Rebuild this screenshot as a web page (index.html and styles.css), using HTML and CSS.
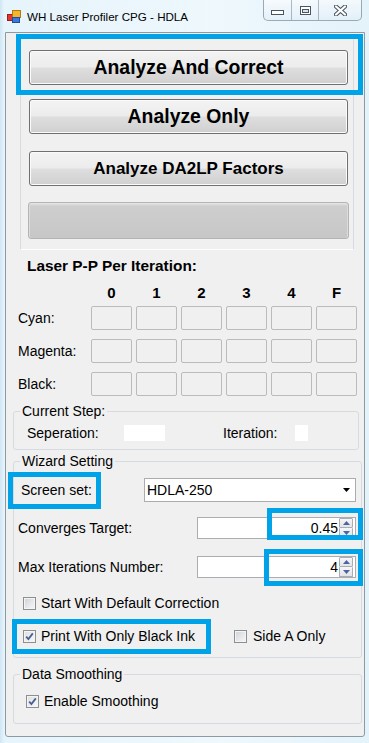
FILE: index.html
```html
<!DOCTYPE html>
<html>
<head>
<meta charset="utf-8">
<title>WH Laser Profiler CPG - HDLA</title>
<link rel="stylesheet" href="styles.css">
</head>
<body>
<div class="window">
  <div class="titlebar">
    <svg class="app-icon" width="14" height="13" viewBox="0 0 14 13">
      <rect x="0.5" y="4.5" width="5" height="6" fill="#e0382e" stroke="#9b1f18"/>
      <rect x="5.5" y="0.5" width="8" height="7" fill="#f6b52a" stroke="#b57a0e"/>
      <rect x="5.5" y="7.5" width="7" height="5" fill="#3d79dc" stroke="#1f4ea0"/>
    </svg>
    <span class="title">WH Laser Profiler CPG - HDLA</span>
    <div class="caption">
      <div class="cbtn min">
        <svg width="13" height="5" viewBox="0 0 13 5"><rect x="0.5" y="0.5" width="12" height="4" fill="#fff" stroke="#4a5560"/></svg>
      </div>
      <div class="cbtn max">
        <svg width="11" height="9" viewBox="0 0 11 9"><rect x="0.5" y="0.5" width="10" height="8" fill="#fff" stroke="#4a5560"/><rect x="2.5" y="3.5" width="6" height="3" fill="#d8e4ec" stroke="#4a5560"/></svg>
      </div>
      <div class="cbtn close">
        <svg width="13" height="11" viewBox="0 0 13 11"><path d="M2 1.5 L11 9.5 M11 1.5 L2 9.5" stroke="#4a5560" stroke-width="4.2" stroke-linecap="round"/><path d="M2 1.5 L11 9.5 M11 1.5 L2 9.5" stroke="#ffffff" stroke-width="2.2" stroke-linecap="round"/></svg>
      </div>
    </div>
  </div>

  <div class="client">
    <div class="actions">
      <button class="btn big">Analyze And Correct</button>
      <button class="btn big b2">Analyze Only</button>
      <button class="btn mid b3">Analyze DA2LP Factors</button>
      <div class="progress"></div>
    </div>

    <div class="pp-title">Laser P-P Per Iteration:</div>
    <div class="pp-row pp-head">
      <span class="pp-label"></span>
      <span class="pp-cell">0</span><span class="pp-cell">1</span><span class="pp-cell">2</span><span class="pp-cell">3</span><span class="pp-cell">4</span><span class="pp-cell">F</span>
    </div>
    <div class="pp-row first">
      <span class="pp-label">Cyan:</span>
      <span class="pp-box"></span><span class="pp-box"></span><span class="pp-box"></span><span class="pp-box"></span><span class="pp-box"></span><span class="pp-box"></span>
    </div>
    <div class="pp-row">
      <span class="pp-label">Magenta:</span>
      <span class="pp-box"></span><span class="pp-box"></span><span class="pp-box"></span><span class="pp-box"></span><span class="pp-box"></span><span class="pp-box"></span>
    </div>
    <div class="pp-row">
      <span class="pp-label">Black:</span>
      <span class="pp-box"></span><span class="pp-box"></span><span class="pp-box"></span><span class="pp-box"></span><span class="pp-box"></span><span class="pp-box"></span>
    </div>

    <fieldset class="group step">
      <legend>Current Step:</legend>
      <div class="step-row">
        <span class="sep-label">Seperation:</span>
        <span class="white-box sep-box"></span>
        <span class="it-label">Iteration:</span>
        <span class="white-box it-box"></span>
      </div>
    </fieldset>

    <fieldset class="group wizard">
      <legend>Wizard Setting</legend>
      <div class="w-row r1">
        <span class="w-label screen">Screen set:</span>
        <div class="combo"><span class="combo-text">HDLA-250</span><svg class="combo-arrow" width="7" height="4" viewBox="0 0 7 4"><path d="M0 0 H7 L3.5 4 Z" fill="#000"/></svg></div>
      </div>
      <div class="w-row r2">
        <span class="w-label">Converges Target:</span>
        <div class="num"><span class="num-val">0.45</span><span class="spin"><span class="sb up"><svg width="7" height="4" viewBox="0 0 7 4"><path d="M0 4 H7 L3.5 0 Z" fill="#4c64a4"/></svg></span><span class="sb dn"><svg width="7" height="4" viewBox="0 0 7 4"><path d="M0 0 H7 L3.5 4 Z" fill="#4c64a4"/></svg></span></span></div>
      </div>
      <div class="w-row r3">
        <span class="w-label">Max Iterations Number:</span>
        <div class="num"><span class="num-val">4</span><span class="spin"><span class="sb up"><svg width="7" height="4" viewBox="0 0 7 4"><path d="M0 4 H7 L3.5 0 Z" fill="#4c64a4"/></svg></span><span class="sb dn"><svg width="7" height="4" viewBox="0 0 7 4"><path d="M0 0 H7 L3.5 4 Z" fill="#4c64a4"/></svg></span></span></div>
      </div>
      <div class="w-row r4">
        <span class="cb"></span><span class="cb-text">Start With Default Correction</span>
      </div>
      <div class="w-row r5">
        <span class="cb checked"><svg width="9" height="9" viewBox="0 0 9 9"><path d="M1.2 4.6 L3.4 7 L7.8 1.4" fill="none" stroke="#4a5f97" stroke-width="1.8"/></svg></span><span class="cb-text">Print With Only Black Ink</span>
        <span class="cb side"></span><span class="cb-text side-text">Side A Only</span>
      </div>
    </fieldset>

    <fieldset class="group smooth">
      <legend>Data Smoothing</legend>
      <div class="w-row r6">
        <span class="cb checked"><svg width="9" height="9" viewBox="0 0 9 9"><path d="M1.2 4.6 L3.4 7 L7.8 1.4" fill="none" stroke="#4a5f97" stroke-width="1.8"/></svg></span><span class="cb-text">Enable Smoothing</span>
      </div>
    </fieldset>
  </div>

  <span class="mark m1"></span>
  <span class="mark m2"></span>
  <span class="mark m3"></span>
  <span class="mark m4"></span>
  <span class="mark m5"></span>
</div>
</body>
</html>
```

FILE: styles.css
```css
* { box-sizing: border-box; }
html, body { margin: 0; padding: 0; }
body {
  width: 369px;
  height: 743px;
  overflow: hidden;
  background: linear-gradient(90deg, #cfe6f4 0, #e6f4fb 4px, #eef8fd 60%, #e4f2fa 100%);
  font-family: "Liberation Sans", Arial, sans-serif;
  font-size: 14px;
  color: #000;
}
.window { position: relative; width: 369px; height: 743px; }

/* title bar */
.titlebar { height: 32px; display: flex; align-items: flex-start; padding-left: 7px; }
.app-icon { margin-top: 10px; flex: none; }
.title { margin-left: 6px; margin-top: 10px; font-size: 11.6px; line-height: 13px; white-space: nowrap; }
.caption {
  margin-left: auto;
  margin-right: 7px;
  display: flex;
  height: 21px;
  border: 1px solid rgba(70, 90, 110, 0.5);
  border-top: none;
  border-radius: 0 0 5px 5px;
  background: linear-gradient(rgba(255,255,255,0.55), rgba(225,238,247,0.7));
  overflow: hidden;
}
.cbtn { display: flex; align-items: center; justify-content: center; height: 100%; }
.cbtn + .cbtn { border-left: 1px solid rgba(70, 90, 110, 0.4); }
.cbtn.min { width: 27px; padding-top: 5px; }
.cbtn.max { width: 27px; }
.cbtn.close { width: 43px; }

/* client */
.client {
  margin-left: 5px;
  width: 360px;
  height: 705px;
  border: 1px solid #8d9aa4;
  border-radius: 0 0 3px 3px;
  background: #f0f0f0;
}

.actions {
  margin: 2px 0 0 14px;
  width: 334px;
  height: 215px;
  border: 1px solid #d5dbe0;
  border-bottom-color: #fdfdfd;
  padding: 14px 0 0 8px;
  display: flex;
  flex-direction: column;
  align-items: flex-start;
}
.btn {
  width: 319px;
  height: 35px;
  border: 1px solid #707070;
  border-radius: 3px;
  background: linear-gradient(#f3f3f3 0%, #ececec 48%, #dedede 52%, #d0d0d0 100%);
  box-shadow: inset 0 0 0 1px #fbfbfb;
  font-family: "Liberation Sans", Arial, sans-serif;
  font-weight: bold;
  color: #000;
  padding: 0;
  margin: 0;
}
.btn.big { font-size: 19.4px; }
.btn.mid { font-size: 17px; }
.b2 { margin-top: 14px; }
.b3 { margin-top: 17px; }
.progress {
  margin: 16px 0 0 -1px;
  width: 321px;
  height: 37px;
  border: 1px solid #b4b4b4;
  border-radius: 3px;
  background: linear-gradient(#e9e9e9 0, #cecece 3px, #c7c7c7 100%);
  box-shadow: inset 1px 0 0 #dcdcdc, inset -1px 0 0 #dcdcdc;
}

/* laser p-p grid */
.pp-title { margin-top: 8px; padding-left: 21px; font-weight: bold; font-size: 15.4px; line-height: 16px; }
.pp-row { display: flex; align-items: center; gap: 4px; }
.pp-label { width: 81px; padding-left: 12px; flex: none; line-height: 16px; }
.pp-head { margin-top: 11px; height: 16px; }
.pp-cell { width: 41px; text-align: center; font-weight: bold; font-size: 15px; line-height: 16px; }
.pp-row.first { margin-top: 5px; }
.pp-row + .pp-row:not(.first) { margin-top: 9px; }
.pp-box {
  width: 41px;
  height: 24px;
  border: 1px solid #bbbbbb;
  border-radius: 2px;
  background: #f0f0f0;
}

/* group boxes */
.group {
  margin: 0 0 0 7px;
  padding: 0;
  border: 1px solid #d5dbe0;
  border-radius: 3px;
  min-inline-size: 0;
}
.group legend {
  margin-left: 6px;
  padding: 0 2px;
  font-size: 14px;
  line-height: 16px;
}
.step { margin-top: 7px; width: 346px; }
.step-row { display: flex; align-items: center; height: 16px; margin: 6px 0 8px 0; }
.sep-label { margin-left: 13px; width: 97px; }
.white-box { background: #fff; height: 16px; }
.sep-box { width: 41px; }
.it-label { margin-left: 58px; width: 72px; }
.it-box { width: 13px; }

.wizard { margin-top: 3px; width: 349px; padding-bottom: 13px; }
.smooth { margin-top: 8px; width: 349px; padding-bottom: 14px; }
.w-row { display: flex; align-items: center; }
.w-label { padding-left: 4px; line-height: 16px; }
.r1 { margin-top: 9px; height: 24px; }
.r1 .w-label { padding-left: 7px; width: 130px; flex: none; }
.r2 { margin-top: 15px; height: 22px; }
.r3 { margin-top: 17px; height: 22px; }
.r2 .w-label, .r3 .w-label { width: 183px; flex: none; }
.r4 { margin-top: 17px; height: 16px; padding-left: 9px; }
.r5 { margin-top: 17px; height: 16px; padding-left: 9px; }
.r6 { margin-top: 11px; height: 16px; padding-left: 12px; }

.combo {
  width: 212px;
  height: 24px;
  border: 1px solid #acacac;
  background: #fff;
  display: flex;
  align-items: center;
  padding-left: 2px;
}
.combo-text { flex: 1; line-height: 16px; }
.combo-arrow { margin-right: 5px; }

.num {
  width: 159px;
  height: 22px;
  border: 1px solid #abadb3;
  background: #fff;
  display: flex;
  align-items: center;
}
.num-val { flex: 1; text-align: right; line-height: 16px; padding-right: 1px; }
.spin { width: 14px; height: 20px; margin-right: 2px; display: flex; flex-direction: column; }
.sb {
  height: 10px;
  border: 1px solid #a9aeb6;
  border-radius: 1px;
  background: linear-gradient(#f6f6f6, #e2e4e8);
  display: flex;
  align-items: center;
  justify-content: center;
}
.sb.dn { border-top: none; }

.cb {
  width: 13px;
  height: 13px;
  flex: none;
  border: 1px solid #8e8f8f;
  background: linear-gradient(135deg, #cdd1d6 0%, #e9eaec 60%, #f7f7f7 100%);
  box-shadow: inset 0 0 0 1px #f4f4f4;
  display: flex;
  align-items: center;
  justify-content: center;
}
.cb.checked { background: linear-gradient(135deg, #dadde1 0%, #eeeff0 60%, #f8f8f8 100%); }
.cb-text { margin-left: 5px; line-height: 16px; white-space: nowrap; }
.r5 .cb-text:nth-child(2) { width: 193px; flex: none; }
.cb.side { margin-left: 0; }
.side-text { margin-left: 6px; }
.r6 .cb-text { margin-left: 5px; }

/* annotation highlight boxes */
.mark { position: absolute; border: 5px solid #00a2e8; pointer-events: none; }
.m1 { left: 16px; top: 34px; width: 347px; height: 61px; }
.m2 { left: 8px; top: 472px; width: 93px; height: 37px; }
.m3 { left: 267px; top: 508px; width: 96px; height: 32px; }
.m4 { left: 264px; top: 549px; width: 99px; height: 37px; }
.m5 { left: 12px; top: 619px; width: 199px; height: 35px; }
```
